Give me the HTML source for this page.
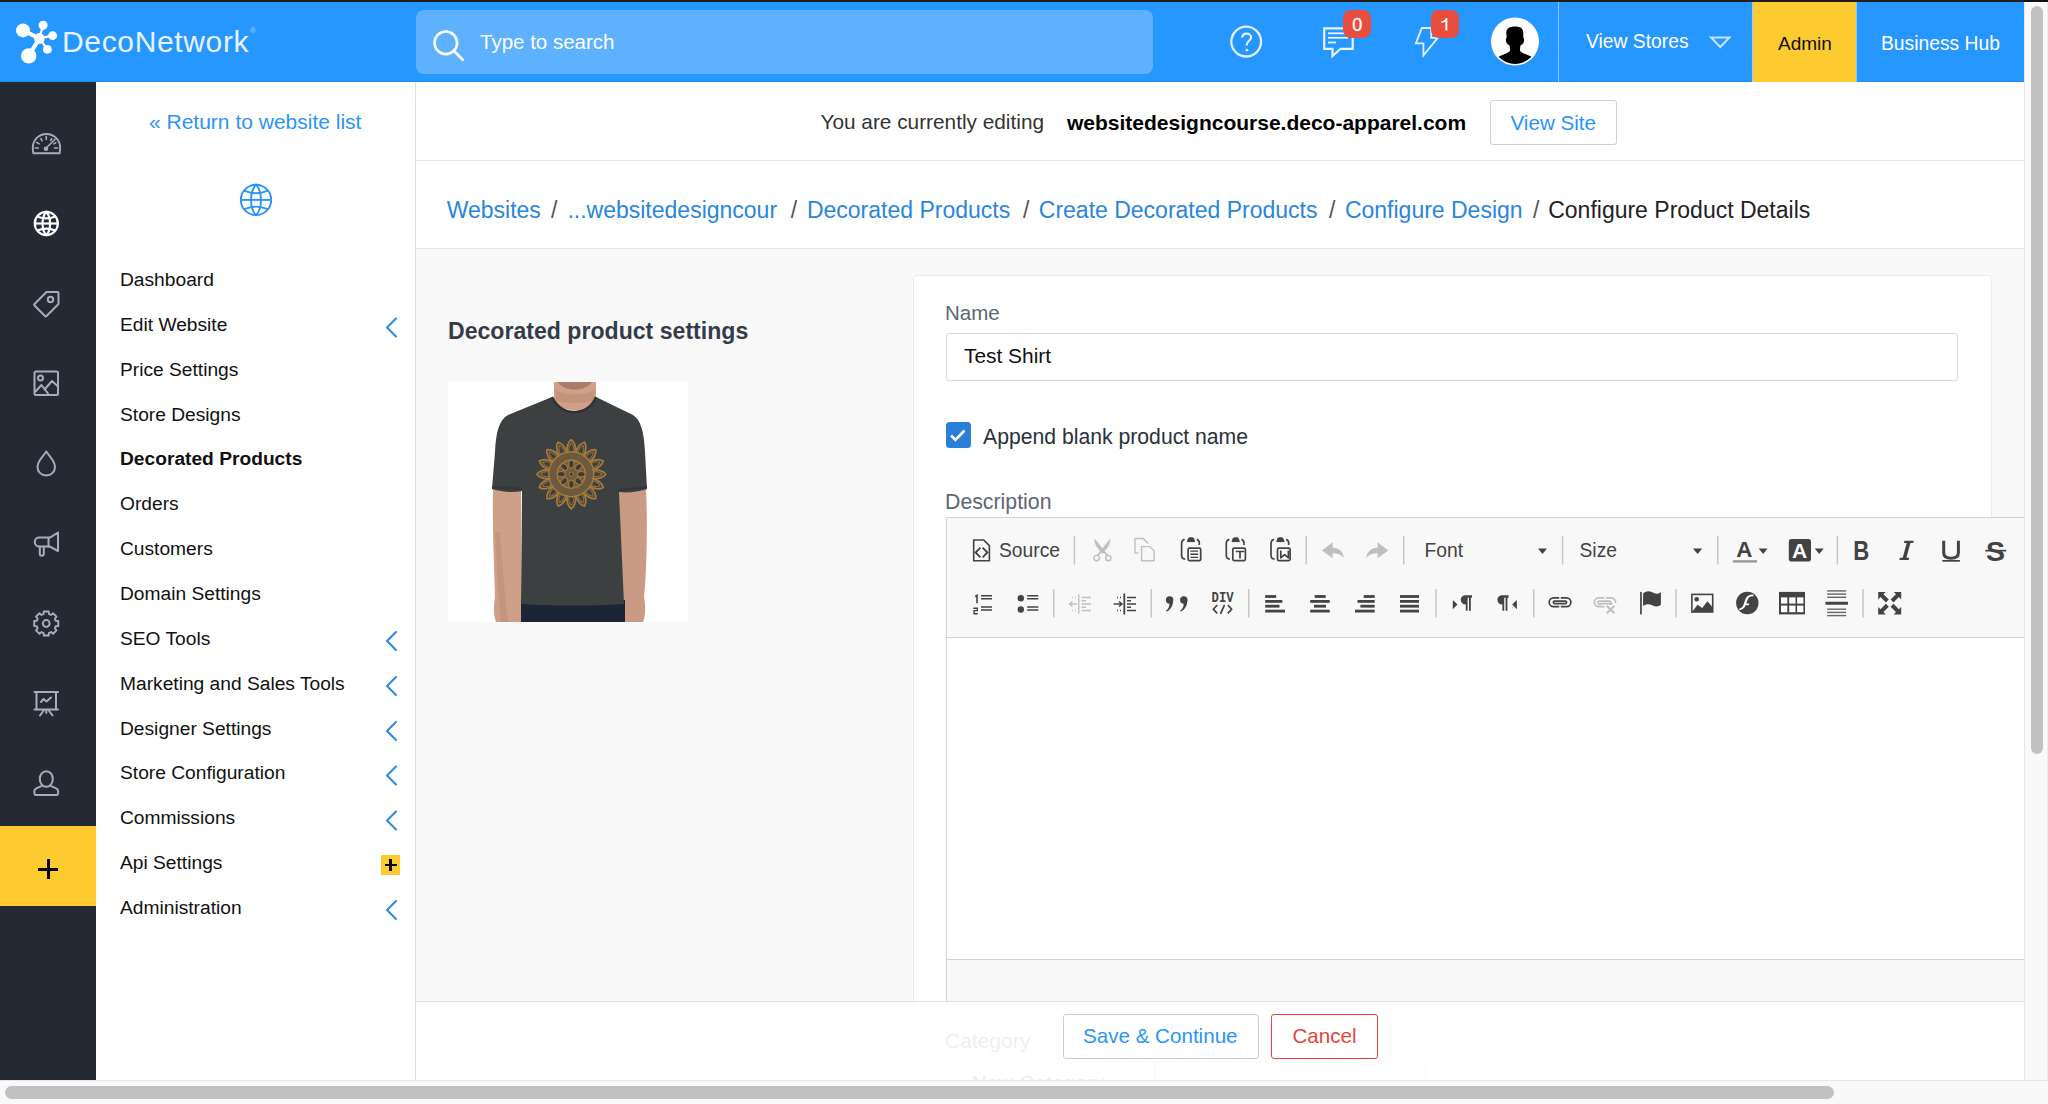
<!DOCTYPE html>
<html><head><meta charset="utf-8">
<style>
*{margin:0;padding:0;box-sizing:border-box}
html,body{width:2048px;height:1104px;overflow:hidden;background:#fff;font-family:"Liberation Sans",sans-serif}
.a{position:absolute}
.t{position:absolute;white-space:nowrap;line-height:1}
#topline{left:0;top:0;width:2048px;height:2px;background:linear-gradient(to right,#221d18 2024px,#121212 2024px)}
#hdr{left:0;top:2px;width:2024px;height:80px;background:#2697fe}
#hdrline{left:0;top:81px;width:2024px;height:1px;background:#1f8ff6}
#search{left:416px;top:10px;width:737px;height:64px;background:#5db1fd;border-radius:8px}
#side{left:0;top:82px;width:96px;height:998px;background:#232a34}
#nav{left:96px;top:82px;width:320px;height:998px;background:#fff;border-right:1px solid #dedede}
#main{left:416px;top:82px;width:1608px;height:998px;background:#f9f9f9;overflow:hidden}
#vscroll{left:2024px;top:2px;width:24px;height:1078px;background:#f9f9f9;border-left:1px solid #e6e6e6;border-right:1px solid #ececec;border-top:1px solid #fff}
#vthumb{left:2030.5px;top:6px;width:12.5px;height:747.5px;background:#c1c1c1;border-radius:7px}
#hscroll{left:0;top:1080px;width:2048px;height:24px;background:#f9f9f9;border-top:1px solid #e6e6e6}
#hthumb{left:5px;top:1086px;width:1829px;height:13px;background:#c1c1c1;border-radius:7px}
.nv{position:absolute;left:120px;font-size:19.2px;color:#111;white-space:nowrap;line-height:1}
.chev{position:absolute;left:385px;width:14px;height:20px}
</style></head><body>
<div class="a" id="topline"></div>
<div class="a" id="hdr"></div>
<div class="a" id="hdrline"></div>
<div class="a" id="search"></div>

<!-- logo -->
<svg class="a" style="left:10px;top:15px" width="60" height="55" viewBox="10 15 60 55">
 <g fill="#fff" stroke="#fff">
  <line x1="39.4" y1="38.4" x2="23" y2="30.4" stroke-width="4"/>
  <line x1="39.4" y1="38.4" x2="43.1" y2="25.2" stroke-width="2.2"/>
  <line x1="39.4" y1="38.4" x2="52.6" y2="35.7" stroke-width="2.2"/>
  <line x1="39.4" y1="38.4" x2="47.4" y2="49.4" stroke-width="2.2"/>
  <line x1="39.4" y1="38.4" x2="28.7" y2="55.9" stroke-width="4"/>
  <circle cx="39.4" cy="38.4" r="5.3" stroke="none"/>
  <circle cx="23" cy="30.4" r="7" stroke="none"/>
  <circle cx="43.1" cy="25.2" r="4.5" stroke="none"/>
  <circle cx="52.6" cy="35.7" r="4.4" stroke="none"/>
  <circle cx="47.4" cy="49.4" r="4.4" stroke="none"/>
  <circle cx="28.7" cy="55.9" r="7.7" stroke="none"/>
 </g>
</svg>
<div class="t" id="logotxt" style="left:62px;top:27px;font-size:30px;color:#f4f9ff;letter-spacing:0.65px;color:#e8f2ff">DecoNetwork</div>
<div class="t" style="left:250px;top:27px;font-size:8px;color:#9fd0ff">&reg;</div>
<!-- search -->
<svg class="a" style="left:428px;top:26px" width="42" height="40" viewBox="428 26 42 40">
 <circle cx="445.8" cy="42.8" r="11.3" fill="none" stroke="#fff" stroke-width="2.6"/>
 <line x1="454" y1="51" x2="463.5" y2="60.5" stroke="#fff" stroke-width="2.6"/>
</svg>
<div class="t" id="searchtxt" style="left:480px;top:32px;font-size:20.5px;color:#fff">Type to search</div>
<!-- help -->
<svg class="a" style="left:1226px;top:22px" width="40" height="40" viewBox="1226 22 40 40">
 <circle cx="1246.2" cy="41.6" r="14.9" fill="none" stroke="#e2f0ff" stroke-width="2.3"/>
 <path d="M1242.2 37.6 C1242.3 34.7 1244.2 33.6 1246.6 33.6 C1249.3 33.6 1251.1 35.3 1251.1 37.5 C1251.1 40.3 1247.3 41 1246.9 44 L1246.9 45.6" fill="none" stroke="#e2f0ff" stroke-width="2.1"/>
 <circle cx="1246.9" cy="50.2" r="1.4" fill="#e2f0ff"/>
</svg>
<!-- chat -->
<svg class="a" style="left:1318px;top:22px" width="40" height="40" viewBox="1318 22 40 40">
 <path d="M1324.2 28.4 H1352.7 V48.8 H1340.5 L1332.5 56 V48.8 H1324.2 Z" fill="none" stroke="#eaf4ff" stroke-width="2.2" stroke-linejoin="miter"/>
 <line x1="1328" y1="33.3" x2="1348" y2="33.3" stroke="#eaf4ff" stroke-width="1.8"/>
 <line x1="1328" y1="37.8" x2="1348" y2="37.8" stroke="#eaf4ff" stroke-width="1.8"/>
 <line x1="1328" y1="42.5" x2="1336" y2="42.5" stroke="#eaf4ff" stroke-width="1.8"/>
</svg>
<div class="a" style="left:1342.5px;top:9.5px;width:28.5px;height:28.5px;background:#e84e3e;border-radius:8px"></div>
<div class="t" style="left:1343px;top:16px;width:28.5px;text-align:center;font-size:18px;color:#fff;-webkit-text-stroke:0.3px #fff">0</div>
<!-- lightning -->
<svg class="a" style="left:1408px;top:22px" width="40" height="40" viewBox="1408 22 40 40">
 <path d="M1421.8 28 H1431.2 V37.8 H1437.8 L1423.4 55.4 V43.4 H1415.9 Z" fill="none" stroke="#e2f0ff" stroke-width="1.8" stroke-linejoin="miter"/>
</svg>
<div class="a" style="left:1430.5px;top:9.5px;width:28.5px;height:28.5px;background:#e84e3e;border-radius:8px"></div>
<svg class="a" style="left:1430px;top:9px" width="30" height="30" viewBox="1430 9 30 30"><path d="M1441.3 21.3 C1443.5 21 1445.3 19.8 1446 17.9 H1447.3 V30.4 H1445.4 V21.2 C1444.5 22.2 1443 22.8 1441.3 23 Z" fill="#fff"/></svg>
<!-- avatar -->
<svg class="a" style="left:1490px;top:17px" width="50" height="50" viewBox="1490 17 50 50">
 <defs><clipPath id="avc"><circle cx="1515" cy="41.5" r="22.4"/></clipPath></defs>
 <circle cx="1515" cy="41.5" r="24" fill="#fff"/>
 <g clip-path="url(#avc)" fill="#000">
  <path d="M1506.3 33 C1506.3 28.5 1509.5 26.5 1515 26.5 C1520.5 26.5 1523.3 28.5 1523.3 33 V37.5 C1524.3 38.2 1524.4 41.5 1523.4 43 C1522.6 44 1521.6 45 1520.4 45.5 L1519.9 50.5 C1520.9 52.3 1523.1 53.2 1527.1 54.8 C1529.6 55.8 1531.1 56.5 1532.1 57.5 L1534 70 H1496 L1497.9 57.5 C1498.9 56.5 1500.4 55.8 1502.9 54.8 C1506.9 53.2 1509.1 52.3 1510.1 50.5 L1509.6 45.5 C1508.4 45 1507.4 44 1506.6 43 C1505.6 41.5 1505.7 38.2 1506.7 37.5 Z"/>
 </g>
</svg>
<div class="a" style="left:1558px;top:2px;width:1px;height:80px;background:#86c4ff"></div>
<div class="t" id="viewstores" style="left:1586px;top:32px;font-size:19.3px;color:#fff">View Stores</div>
<svg class="a" style="left:1706px;top:32px" width="30" height="20" viewBox="1706 32 30 20">
 <path d="M1711 37.5 H1729.5 L1720.3 47 Z" fill="none" stroke="#c6e3ff" stroke-width="2"/>
</svg>
<div class="a" style="left:1752px;top:2px;width:104px;height:80px;background:#fdca2f"></div>
<div class="a" style="left:1856px;top:2px;width:1px;height:80px;background:#8cc6fb"></div><div class="a" style="left:1751.5px;top:2px;width:1px;height:80px;background:#9ccdf5"></div>
<div class="t" id="admin" style="left:1778px;top:33.5px;font-size:19px;color:#111">Admin</div>
<div class="t" id="bizhub" style="left:1881px;top:34px;font-size:19.3px;color:#fff">Business Hub</div>
<div class="a" id="side"></div>
<div class="a" id="nav"></div>

<!-- sidebar icons -->
<svg class="a" style="left:0;top:82px" width="96" height="998" viewBox="0 82 96 998">
 <g fill="none" stroke="#a8aeb9" stroke-width="2" stroke-linecap="round" stroke-linejoin="round">
  <!-- gauge -->
  <path d="M33.3 153.2 C32.8 151.5 32.8 149.5 32.8 147.6 A13.65 13.65 0 0 1 60.1 147.6 C60.1 149.5 60 151.5 59.6 153.2 Z" stroke-width="1.9"/>
  <line x1="35.2" y1="148" x2="38.2" y2="148" stroke-width="1.6"/><line x1="54.4" y1="148" x2="57.6" y2="148" stroke-width="1.6"/>
  <line x1="36.6" y1="142.4" x2="39" y2="143.8" stroke-width="1.6"/><line x1="40.9" y1="138.6" x2="42.1" y2="140.8" stroke-width="1.6"/><line x1="46.3" y1="136.6" x2="46.3" y2="139.4" stroke-width="1.6"/><line x1="51.7" y1="138.6" x2="50.6" y2="140.5" stroke-width="1.6"/><line x1="55.8" y1="142.7" x2="53.7" y2="143.9" stroke-width="1.6"/>
  <line x1="46" y1="148.2" x2="55" y2="139.2" stroke-width="1.6"/>
  <circle cx="46" cy="148.7" r="1.6" fill="#a8aeb9" stroke-width="1.4"/>
  <!-- tag -->
  <path d="M46.5 292 H57.5 C58 292 58.5 292.5 58.5 293 V304 L46.5 316 C46 316.5 45.5 316.5 45 316 L34.5 305.5 C34 305 34 304.5 34.5 304 Z"/>
  <circle cx="50.5" cy="299.5" r="2.7"/>
  <!-- image -->
  <rect x="34.5" y="371.5" width="23.5" height="23.5" rx="1.5"/>
  <circle cx="40.5" cy="378" r="2.5"/>
  <path d="M35.5 391.5 L41.5 385 L48 393.5 M44.5 389.5 L52 381 L57.5 386"/>
  <!-- drop -->
  <path d="M46.3 451.5 L52.5 460 C54.5 463 55 465 55 467 C55 472 51 475.5 46.3 475.5 C41.6 475.5 37.5 472 37.5 467 C37.5 465 38 463 40 460 Z"/>
  <!-- megaphone -->
  <path d="M58 532.5 V551 L50 546.6 H39.5 C36.8 546.6 34.8 544.6 34.8 542 C34.8 539.4 36.8 537.6 39.5 537.6 H50 Z"/>
  <line x1="48.5" y1="537.8" x2="48.5" y2="546.4"/>
  <path d="M39.8 546.8 V553.8 C39.8 555 40.6 555.8 41.8 555.8 C43 555.8 43.8 555 43.8 553.8 V546.8"/>
  <!-- gear -->
  <path d="M55.67 620.79 L58.30 621.06 L58.30 625.94 L55.67 626.21 A9.8 9.8 0 0 1 54.82 628.24 L56.50 630.30 L53.05 633.75 L50.99 632.07 A9.8 9.8 0 0 1 48.96 632.92 L48.69 635.55 L43.81 635.55 L43.54 632.92 A9.8 9.8 0 0 1 41.51 632.07 L39.45 633.75 L36.00 630.30 L37.68 628.24 A9.8 9.8 0 0 1 36.83 626.21 L34.20 625.94 L34.20 621.06 L36.83 620.79 A9.8 9.8 0 0 1 37.68 618.76 L36.00 616.70 L39.45 613.25 L41.51 614.93 A9.8 9.8 0 0 1 43.54 614.08 L43.81 611.45 L48.69 611.45 L48.96 614.08 A9.8 9.8 0 0 1 50.99 614.93 L53.05 613.25 L56.50 616.70 L54.82 618.76 A9.8 9.8 0 0 1 55.67 620.79 Z" stroke-width="1.9"/>
  <circle cx="46.25" cy="623.5" r="3.4"/>
  <!-- presentation -->
  <line x1="34.5" y1="692" x2="58" y2="692"/><line x1="34.5" y1="709.5" x2="58" y2="709.5"/>
  <path d="M36.5 692 V709.5 M56 692 V709.5"/>
  <path d="M41 702 L43.5 699 L46.5 701.5 L51 697.5"/>
  <path d="M40 715.5 L44 710 M52.5 715.5 L48.5 710 M46.3 710 V713"/>
  <!-- user -->
  <ellipse cx="46.3" cy="779" rx="6.5" ry="7.8"/>
  <path d="M41.5 786 C39 787.5 36 788 35 789.5 C34 790.5 34 794.5 35.5 795 H57 C58.5 794.5 58.5 790.5 57.5 789.5 C56.5 788 53.5 787.5 51 786"/>
 </g>
 <!-- globe active (white) -->
 <g fill="none" stroke="#fff" stroke-width="2.9" transform="translate(46.3,223.5) scale(0.76) translate(-256,-199.9)">
  <circle cx="256" cy="199.9" r="15.2"/>
  <path d="M256 184.7 C249.5 191.5 249.3 208.5 256 215.1 C262.7 208.5 262.5 191.5 256 184.7 Z"/>
  <line x1="240.8" y1="199.9" x2="271.2" y2="199.9"/>
  <path d="M244 190.6 C249 192.6 252.5 193.2 256 193.2 C259.5 193.2 263 192.6 268 190.6"/>
  <path d="M244 209.2 C249 207.2 252.5 206.6 256 206.6 C259.5 206.6 263 207.2 268 209.2"/>
 </g>
</svg>
<div class="a" style="left:0;top:825.5px;width:96px;height:80px;background:#fdca2f"></div>
<div class="a" style="left:38px;top:867.5px;width:20px;height:3px;background:#000"></div>
<div class="a" style="left:46.5px;top:859px;width:3px;height:20px;background:#000"></div>

<!-- nav panel -->
<div class="t" id="retlink" style="left:149px;top:111px;font-size:21px;color:#2b95f6">&laquo; Return to website list</div>
<svg class="a" style="left:236px;top:180px" width="40" height="40" viewBox="236 180 40 40">
 <g fill="none" stroke="#2b95f6" stroke-width="1.9">
  <circle cx="256" cy="199.9" r="15.2"/>
  <path d="M256 184.7 C249.5 191.5 249.3 208.5 256 215.1 C262.7 208.5 262.5 191.5 256 184.7 Z"/>
  <line x1="240.8" y1="199.9" x2="271.2" y2="199.9"/>
  <path d="M244 190.6 C249 192.6 252.5 193.2 256 193.2 C259.5 193.2 263 192.6 268 190.6"/>
  <path d="M244 209.2 C249 207.2 252.5 206.6 256 206.6 C259.5 206.6 263 207.2 268 209.2"/>
 </g>
</svg>
<div class="nv" style="top:269.5px">Dashboard</div>
<div class="nv" style="top:314.5px">Edit Website</div>
<div class="nv" style="top:359.5px">Price Settings</div>
<div class="nv" style="top:404.5px">Store Designs</div>
<div class="nv" style="top:448.5px;font-weight:bold">Decorated Products</div>
<div class="nv" style="top:493.5px">Orders</div>
<div class="nv" style="top:538.5px">Customers</div>
<div class="nv" style="top:583.5px">Domain Settings</div>
<div class="nv" style="top:628.5px">SEO Tools</div>
<div class="nv" style="top:673.5px">Marketing and Sales Tools</div>
<div class="nv" style="top:718.5px">Designer Settings</div>
<div class="nv" style="top:762.5px">Store Configuration</div>
<div class="nv" style="top:807.5px">Commissions</div>
<div class="nv" style="top:852.5px">Api Settings</div>
<div class="nv" style="top:897.5px">Administration</div>
<svg class="a" style="left:380px;top:300px" width="24" height="630" viewBox="380 300 24 630">
 <g fill="none" stroke="#2b8be2" stroke-width="2.1" stroke-linecap="round" stroke-linejoin="round">
  <path d="M396 318.5 L387 327.5 L396 336.5"/>
  <path d="M396 632 L387 641 L396 650"/>
  <path d="M396 677 L387 686 L396 695"/>
  <path d="M396 722 L387 731 L396 740"/>
  <path d="M396 766.5 L387 775.5 L396 784.5"/>
  <path d="M396 811.5 L387 820.5 L396 829.5"/>
  <path d="M396 901 L387 910 L396 919"/>
 </g>
</svg>
<div class="a" style="left:381px;top:854.5px;width:19px;height:20.5px;background:#fdca2f"></div>
<div class="a" style="left:384.5px;top:863.5px;width:12px;height:2.4px;background:#000"></div>
<div class="a" style="left:389.3px;top:858.6px;width:2.4px;height:12px;background:#000"></div>
<div class="a" id="main"></div>

<!-- main top bars -->
<div class="a" style="left:416px;top:82px;width:1608px;height:79px;background:#fff;border-bottom:1px solid #e4e4e4"></div>
<div class="a" style="left:416px;top:161px;width:1608px;height:88px;background:#fff;border-bottom:1px solid #e4e4e4"></div>
<div class="t" id="editing" style="left:820.5px;top:112.2px;font-size:20.8px;color:#333">You are currently editing</div>
<div class="t" id="domain" style="left:1067px;top:112.2px;font-size:21px;font-weight:bold;color:#000">websitedesigncourse.deco-apparel.com</div>
<div class="a" style="left:1490px;top:99.5px;width:127px;height:45.5px;border:1px solid #cfcfcf;border-radius:3px;background:#fff"></div>
<div class="t" id="viewsite" style="left:1510.5px;top:112.5px;font-size:20.6px;color:#2b95f6">View Site</div>
<div class="t bc" style="left:446.7px;top:199px;font-size:23px;color:#2a86dc">Websites</div>
<div class="t bc" style="left:551px;top:199px;font-size:23px;color:#555">/</div>
<div class="t bc" style="left:567.4px;top:199px;font-size:23px;color:#2a86dc">...websitedesigncour</div>
<div class="t bc" style="left:790.8px;top:199px;font-size:23px;color:#555">/</div>
<div class="t bc" style="left:806.9px;top:199px;font-size:23px;color:#2a86dc">Decorated Products</div>
<div class="t bc" style="left:1023px;top:199px;font-size:23px;color:#555">/</div>
<div class="t bc" style="left:1038.8px;top:199px;font-size:23px;color:#2a86dc">Create Decorated Products</div>
<div class="t bc" style="left:1329px;top:199px;font-size:23px;color:#555">/</div>
<div class="t bc" style="left:1344.9px;top:199px;font-size:23px;color:#2a86dc">Configure Design</div>
<div class="t bc" style="left:1533px;top:199px;font-size:23px;color:#555">/</div>
<div class="t bc" style="left:1548.2px;top:199px;font-size:23px;color:#222">Configure Product Details</div>

<!-- left column -->
<div class="t" id="dps" style="left:448px;top:319.7px;font-size:23.1px;font-weight:bold;color:#353c49">Decorated product settings</div>
<div class="a" id="prodimg" style="left:448px;top:382px;width:240px;height:240px;background:#fff;overflow:hidden"><svg width="240" height="240" viewBox="0 0 240 240">
 <rect width="240" height="240" fill="#fff"/>
 <path d="M45 104 C44 150 47 200 47 215 C45 225 46 235 48 240 H76 C77 232 76 224 73 214 L73 108 Z" fill="#cfa088"/>
 <path d="M198 104 C200 150 198 200 196 215 C198 225 197 235 195 240 H169 C168 232 169 224 172 214 L171 108 Z" fill="#c99a84"/>
 <path d="M47 150 C49 190 51 225 53 240 H60 C57 215 54 180 52 150 Z" fill="#b98a73" opacity="0.5"/>
 <path d="M106 0 H148 V22 C140 30 115 30 106 22 Z" fill="#cf9f86"/>
 <path d="M110 0 C113 5 120 7.5 127 7.5 C134 7.5 140 5 144 0 Z" fill="#9a7463" opacity="0.8"/>
 <path d="M108 8 C115 14 139 14 146 8 V18 C138 22 116 22 108 18 Z" fill="#b88a72" opacity="0.5"/>
 <rect x="73" y="218" width="104" height="22" fill="#1c2535"/>
 <path d="M104 15 C110 27 118 30 126 30 C134 30 143 27 148 15 L185 33 C193 38 196 50 197 70 L199 107 C190 110 180 111 171 110 L176 222 C150 224 100 224 73 222 L74 109 C65 111 54 110 44 107 L47 70 C48 50 51 38 60 33 Z" fill="#3d4041"/>
 <path d="M104 15 C110 27 118 30 126 30 C134 30 143 27 148 15" fill="none" stroke="#2f3233" stroke-width="2.5"/>
 <path d="M44 105 L74 107 M199 105 L171 108" stroke="#343738" stroke-width="2.5"/>
 <g fill="none" stroke="#a87b3b">
  <circle cx="123.3" cy="92.2" r="18.5" stroke-width="9" opacity="0.45"/><circle cx="123.3" cy="92.2" r="8" stroke-width="12" opacity="0.5"/>
  <path d="M119.1 71.1 Q118.2 61.6 123.3 57.7 Q128.4 61.6 127.5 71.1 M127.5 71.1 Q130.2 62.0 136.5 60.3 Q139.8 65.9 135.2 74.3 M135.2 74.3 Q141.3 66.9 147.7 67.8 Q148.6 74.2 141.2 80.3 M141.2 80.3 Q149.6 75.7 155.2 79.0 Q153.5 85.3 144.4 88.0 M144.4 88.0 Q153.9 87.1 157.8 92.2 Q153.9 97.3 144.4 96.4 M144.4 96.4 Q153.5 99.1 155.2 105.4 Q149.6 108.7 141.2 104.1 M141.2 104.1 Q148.6 110.2 147.7 116.6 Q141.3 117.5 135.2 110.1 M135.2 110.1 Q139.8 118.5 136.5 124.1 Q130.2 122.4 127.5 113.3 M127.5 113.3 Q128.4 122.8 123.3 126.7 Q118.2 122.8 119.1 113.3 M119.1 113.3 Q116.4 122.4 110.1 124.1 Q106.8 118.5 111.4 110.1 M111.4 110.1 Q105.3 117.5 98.9 116.6 Q98.0 110.2 105.4 104.1 M105.4 104.1 Q97.0 108.7 91.4 105.4 Q93.1 99.1 102.2 96.4 M102.2 96.4 Q92.7 97.3 88.8 92.2 Q92.7 87.1 102.2 88.0 M102.2 88.0 Q93.1 85.3 91.4 79.0 Q97.0 75.7 105.4 80.3 M105.4 80.3 Q98.0 74.2 98.9 67.8 Q105.3 66.9 111.4 74.3 M111.4 74.3 Q106.8 65.9 110.1 60.3 Q116.4 62.0 119.1 71.1 " stroke-width="1.7"/>
  <path d="M120.8 69.3 Q120.5 63.8 123.3 61.2 Q126.1 63.8 125.8 69.3 M129.8 70.1 Q131.6 64.9 135.2 63.6 Q136.7 67.1 134.3 72.0 M137.7 74.3 Q141.4 70.2 145.2 70.3 Q145.3 74.1 141.2 77.8 M143.5 81.2 Q148.4 78.8 151.9 80.3 Q150.6 83.9 145.4 85.7 M146.2 89.7 Q151.7 89.4 154.3 92.2 Q151.7 95.0 146.2 94.7 M145.4 98.7 Q150.6 100.5 151.9 104.1 Q148.4 105.6 143.5 103.2 M141.2 106.6 Q145.3 110.3 145.2 114.1 Q141.4 114.2 137.7 110.1 M134.3 112.4 Q136.7 117.3 135.2 120.8 Q131.6 119.5 129.8 114.3 M125.8 115.1 Q126.1 120.6 123.3 123.2 Q120.5 120.6 120.8 115.1 M116.8 114.3 Q115.0 119.5 111.4 120.8 Q109.9 117.3 112.3 112.4 M108.9 110.1 Q105.2 114.2 101.4 114.1 Q101.3 110.3 105.4 106.6 M103.1 103.2 Q98.2 105.6 94.7 104.1 Q96.0 100.5 101.2 98.7 M100.4 94.7 Q94.9 95.0 92.3 92.2 Q94.9 89.4 100.4 89.7 M101.2 85.7 Q96.0 83.9 94.7 80.3 Q98.2 78.8 103.1 81.2 M105.4 77.8 Q101.3 74.1 101.4 70.3 Q105.2 70.2 108.9 74.3 M112.3 72.0 Q109.9 67.1 111.4 63.6 Q115.0 64.9 116.8 70.1 " stroke-width="1.1" opacity="0.8"/>
  <circle cx="123.3" cy="92.2" r="22.5" stroke-width="1.4"/>
  <circle cx="123.3" cy="92.2" r="14" stroke-width="1.4"/>
  
 </g>
 <g fill="#3a3d3e" stroke="#a87b3b" stroke-width="1.1"><ellipse cx="123.3" cy="82.2" rx="2.7" ry="3.9" transform="rotate(0.0 123.3 82.2)"/><ellipse cx="130.4" cy="85.1" rx="2.7" ry="3.9" transform="rotate(45.0 130.4 85.1)"/><ellipse cx="133.3" cy="92.2" rx="2.7" ry="3.9" transform="rotate(90.0 133.3 92.2)"/><ellipse cx="130.4" cy="99.3" rx="2.7" ry="3.9" transform="rotate(135.0 130.4 99.3)"/><ellipse cx="123.3" cy="102.2" rx="2.7" ry="3.9" transform="rotate(180.0 123.3 102.2)"/><ellipse cx="116.2" cy="99.3" rx="2.7" ry="3.9" transform="rotate(225.0 116.2 99.3)"/><ellipse cx="113.3" cy="92.2" rx="2.7" ry="3.9" transform="rotate(270.0 113.3 92.2)"/><ellipse cx="116.2" cy="85.1" rx="2.7" ry="3.9" transform="rotate(315.0 116.2 85.1)"/></g>
 <circle cx="123.3" cy="92.2" r="2" fill="#3a3d3e" stroke="#a87b3b" stroke-width="1"/>
</svg></div>
<!-- card -->
<div class="a" style="left:912.5px;top:275px;width:1079px;height:900px;background:#fff;border:1px solid #ececec;border-radius:4px"></div>
<div class="t" id="lblname" style="left:945px;top:302.5px;font-size:20.5px;color:#5d6776">Name</div>
<div class="a" style="left:946px;top:333px;width:1012px;height:47.5px;border:1px solid #d9d9d9;border-radius:3px;background:#fff"></div>
<div class="t" id="testshirt" style="left:964px;top:346px;font-size:20.9px;color:#111">Test Shirt</div>
<div class="a" style="left:945.5px;top:422px;width:25.5px;height:26px;background:#2a80d9;border-radius:3.5px"></div>
<svg class="a" style="left:945px;top:422px" width="26" height="26" viewBox="945 422 26 26"><path d="M951 435.5 L955.5 440 L964.5 430.5" fill="none" stroke="#fff" stroke-width="2.6"/></svg>
<div class="t" id="append" style="left:983px;top:425.5px;font-size:21.2px;color:#2b313b">Append blank product name</div>
<div class="t" id="lbldesc" style="left:945px;top:491.7px;font-size:21.3px;color:#5d6776">Description</div>
<!-- editor -->
<div class="a" style="left:946px;top:517px;width:1100px;height:484px;border:1px solid #d1d1d1;border-bottom:none;background:#fff"></div>
<div class="a" style="left:947px;top:518px;width:1100px;height:119.5px;background:#f8f8f8;border-bottom:1px solid #d1d1d1"></div>
<div class="a" style="left:947px;top:959px;width:1100px;height:42px;background:#f8f8f8;border-top:1px solid #d1d1d1"></div>

<!-- editor toolbar -->
<svg class="a" style="left:947px;top:518px" width="1077" height="119" viewBox="947 518 1077 119">
 <defs>
  <g id="clip">
   <path d="M1184.6 539.4 C1182.8 540 1181.6 541.2 1181.6 543 V555.6 C1181.6 557.6 1182.9 559 1185.2 559.1" fill="none" stroke="#434343" stroke-width="1.7"/>
   <path d="M1196.8 539.4 C1198.5 540 1199.3 541.2 1199.3 543 V545" fill="none" stroke="#434343" stroke-width="1.7"/>
   <path d="M1187.3 541.6 L1188.4 538.6 C1188.6 538 1189 537.8 1189.6 537.8 H1192.4 C1193 537.8 1193.4 538 1193.6 538.6 L1194.7 541.6 Z" fill="#434343" stroke="#434343" stroke-width="1"/>
   <rect x="1188.1" y="548.2" width="12.6" height="12.4" rx="1.3" fill="none" stroke="#434343" stroke-width="1.7"/>
  </g>
 </defs>
 <!-- row1 -->
 <path d="M973.7 540 H983.7 L989.4 545.7 V560.8 H973.7 Z" fill="none" stroke="#434343" stroke-width="1.6"/>
 <path d="M980.4 547.6 L975.6 552.5 L980.4 557.4 M982.6 547.6 L987.4 552.5 L982.6 557.4" fill="none" stroke="#434343" stroke-width="1.8"/>
 <text x="999" y="556.8" font-family="Liberation Sans" font-size="19.3" fill="#434343">Source</text>
 <g fill="#c6c6c6">
  <rect x="1073.7" y="536" width="1.5" height="28.5"/>
  <rect x="1305.5" y="536" width="1.5" height="28.5"/>
  <rect x="1403" y="536" width="1.5" height="28.5"/>
  <rect x="1561.8" y="536" width="1.5" height="28.5"/>
  <rect x="1717" y="536" width="1.5" height="28.5"/>
  <rect x="1836.6" y="536" width="1.5" height="28.5"/>
 </g>
 <!-- scissors -->
 <g fill="#bfbfbf" stroke="#bfbfbf">
  <path d="M1095 539.4 C1094.5 543 1096.5 547 1101 551.5 L1103.5 553.2 L1104.5 551.5 Z" stroke-width="0.8"/>
  <path d="M1109.8 539.4 C1110.3 543 1108.3 547 1103.8 551.5 L1101.3 553.2 L1100.3 551.5 Z" stroke-width="0.8"/>
  <path d="M1102.4 550 L1097.3 555.6 M1102.4 550 L1107.6 555.6" stroke-width="1.8" fill="none"/>
  <circle cx="1096.6" cy="558.1" r="2.7" fill="none" stroke-width="1.4"/>
  <circle cx="1108.3" cy="558.1" r="2.7" fill="none" stroke-width="1.4"/>
 </g>
 <!-- copy -->
 <path d="M1138.6 552.9 H1135 V538.5 H1143.2 L1148 543.5" fill="none" stroke="#bfbfbf" stroke-width="1.4"/>
 <path d="M1141.6 546.6 H1149.9 L1154.1 551 V560.7 H1141.6 Z" fill="none" stroke="#bfbfbf" stroke-width="1.4"/>
 <!-- paste x3 -->
 <use href="#clip"/>
 <path d="M1190.4 551.1 H1198.1 M1190.4 554.3 H1198.1 M1190.4 557.4 H1198.1" stroke="#434343" stroke-width="1.4"/>
 <use href="#clip" transform="translate(44.7,0)"/>
 <path d="M1235.8 551.5 H1244.3 M1240 551.5 V558.5" stroke="#434343" stroke-width="1.7" fill="none"/>
 <use href="#clip" transform="translate(89.4,0)"/>
 <path d="M1280.8 550.5 V557.8 L1284.6 554.6 L1288.4 557.8 V550.5" stroke="#434343" stroke-width="1.7" fill="none" stroke-linejoin="round"/>
 <!-- undo redo -->
 <path d="M1321.9 550.5 L1332.6 542.3 V547.7 C1339.5 547.7 1343.4 552 1343.7 557.9 C1341 554.5 1337.5 553.3 1332.6 553.3 V558.3 Z" fill="#bfbfbf"/>
 <path d="M1388.3 550.5 L1377.6 542.3 V547.7 C1370.7 547.7 1366.8 552 1366.5 557.9 C1369.2 554.5 1372.7 553.3 1377.6 553.3 V558.3 Z" fill="#bfbfbf"/>
 <!-- font/size combos -->
 <text x="1424.5" y="556.7" font-family="Liberation Sans" font-size="19.3" fill="#434343">Font</text>
 <path d="M1538 548.5 H1547 L1542.5 554 Z" fill="#434343"/>
 <text x="1579.5" y="556.7" font-family="Liberation Sans" font-size="19.3" fill="#434343">Size</text>
 <path d="M1693 548.5 H1702.2 L1697.6 554 Z" fill="#434343"/>
 <!-- text color -->
 <text x="1736.2" y="557.1" font-family="Liberation Sans" font-weight="bold" font-size="22.3" fill="#434343">A</text>
 <rect x="1732.8" y="560.2" width="24.2" height="2.4" fill="#9a9a9a"/>
 <path d="M1758.7 548.5 H1767.6 L1763.15 554 Z" fill="#434343"/>
 <!-- bg color -->
 <rect x="1788.8" y="539.1" width="22.2" height="22.5" rx="2.8" fill="#434343"/>
 <text x="1792.1" y="557.9" font-family="Liberation Sans" font-weight="bold" font-size="21" fill="#fff">A</text>
 <path d="M1814.8 548.5 H1823.7 L1819.25 554 Z" fill="#434343"/>
 <!-- B I U S -->
 <text x="1853.3" y="560" font-family="Liberation Sans" font-weight="bold" font-size="27.5" fill="#434343" textLength="16" lengthAdjust="spacingAndGlyphs">B</text>
 <path d="M1904.5 540.8 H1913.8 L1913.2 543 H1910.4 L1906.4 557.8 H1909.2 L1908.6 560 H1899.3 L1899.9 557.8 H1902.7 L1906.7 543 H1903.9 Z" fill="#434343"/>
 <path d="M1943.7 540.8 V552.8 C1943.7 556.6 1946.3 558.3 1951 558.3 C1955.7 558.3 1958.4 556.6 1958.4 552.8 V540.8" fill="none" stroke="#434343" stroke-width="3"/>
 <rect x="1942.3" y="560" width="17.6" height="1.7" fill="#434343"/>
 <text x="1986" y="560.5" font-family="Liberation Sans" font-weight="bold" font-size="27.5" fill="#434343" textLength="19" lengthAdjust="spacingAndGlyphs">S</text>
 <rect x="1985.3" y="549.8" width="21" height="1.7" fill="#434343"/>
 <!-- row2 -->
 <g fill="#c6c6c6">
  <rect x="1053" y="589" width="1.5" height="28.5"/>
  <rect x="1150.5" y="589" width="1.5" height="28.5"/>
  <rect x="1248" y="589" width="1.5" height="28.5"/>
  <rect x="1435.2" y="589" width="1.5" height="28.5"/>
  <rect x="1533" y="589" width="1.5" height="28.5"/>
  <rect x="1675.3" y="589" width="1.5" height="28.5"/>
  <rect x="1862.3" y="589" width="1.5" height="28.5"/>
 </g>
 <!-- numbered -->
 <path d="M975.2 596.6 L977 595.3 V603.3" fill="none" stroke="#434343" stroke-width="1.6"/>
 <path d="M973.3 608.3 H977.3 V610.6 H974.1 V613.8 H977.8" fill="none" stroke="#434343" stroke-width="1.4"/>
 <path d="M981 595.8 H992 M981 598.8 H992 M981 607.1 H992 M981 610.1 H992" stroke="#434343" stroke-width="1.5"/>
 <!-- bullets -->
 <circle cx="1020.8" cy="598.3" r="3.2" fill="#434343"/><circle cx="1020.8" cy="609.5" r="3.2" fill="#434343"/>
 <path d="M1027.2 595.8 H1038.3 M1027.2 598.8 H1038.3 M1027.2 607.1 H1038.3 M1027.2 610.1 H1038.3" stroke="#434343" stroke-width="1.5"/>
 <!-- outdent -->
 <g stroke="#bfbfbf" stroke-width="1.4" fill="none">
  <path d="M1078.8 594 V614"/>
  <path d="M1081.6 597.5 H1091 M1081.6 600.7 H1086 M1081.6 604 H1091 M1081.6 607.2 H1086 M1081.6 610.5 H1091"/>
  <path d="M1072 597.5 H1073 M1075 597.5 H1076 M1072 610.5 H1073 M1075 610.5 H1076"/>
  <path d="M1077 604 H1070 M1072.5 601.5 L1069.5 604 L1072.5 606.5"/>
 </g>
 <!-- indent -->
 <g stroke="#434343" stroke-width="1.5" fill="none">
  <path d="M1124.3 593.5 V614.5" stroke-width="1.8"/>
  <path d="M1127 597.5 H1136 M1127 600.7 H1131 M1127 604 H1136 M1127 607.2 H1131 M1127 610.5 H1136"/>
  <path d="M1117 597.5 H1118 M1120 597.5 H1121 M1117 610.5 H1118 M1120 610.5 H1121"/>
  <path d="M1113.5 604 H1121.5 M1119 601.5 L1122 604 L1119 606.5"/>
 </g>
 <!-- blockquote -->
 <g fill="#434343">
  <circle cx="1169.6" cy="600" r="3.7"/>
  <path d="M1172.9 599.5 C1173.5 605 1171 609.5 1166.5 611.8 L1166 610.8 C1168.5 609 1169.6 606.5 1169.4 603.5 Z"/>
  <circle cx="1183.8" cy="600" r="3.7"/>
  <path d="M1187.1 599.5 C1187.7 605 1185.2 609.5 1180.7 611.8 L1180.2 610.8 C1182.7 609 1183.8 606.5 1183.6 603.5 Z"/>
 </g>
 <!-- DIV -->
 <text x="1211.6" y="602.2" font-family="Liberation Mono" font-weight="bold" font-size="14.6" fill="#434343" textLength="22" lengthAdjust="spacingAndGlyphs">DIV</text>
 <path d="M1217.2 605 L1213.4 609.2 L1217.2 613.4 M1227.8 605 L1231.6 609.2 L1227.8 613.4 M1224.5 604.8 L1220.5 613.8" fill="none" stroke="#434343" stroke-width="1.7"/>
 <!-- aligns -->
 <g fill="#434343">
  <rect x="1265.2" y="595.1" width="11" height="2.8"/><rect x="1265.2" y="600" width="17.2" height="2.8"/><rect x="1265.2" y="604.8" width="14.3" height="2.8"/><rect x="1265.2" y="609.7" width="19.8" height="2.8"/>
  <rect x="1314.7" y="595.1" width="11" height="2.8"/><rect x="1310.2" y="600" width="19.5" height="2.8"/><rect x="1314" y="604.8" width="12" height="2.8"/><rect x="1310.2" y="609.7" width="19.5" height="2.8"/>
  <rect x="1363.7" y="595.1" width="11" height="2.8"/><rect x="1357.5" y="600" width="17.2" height="2.8"/><rect x="1360.4" y="604.8" width="14.3" height="2.8"/><rect x="1355" y="609.7" width="19.7" height="2.8"/>
  <rect x="1400" y="595.1" width="19" height="2.8"/><rect x="1400" y="600" width="19" height="2.8"/><rect x="1400" y="604.8" width="19" height="2.8"/><rect x="1400" y="609.7" width="19" height="2.8"/>
 </g>
 <!-- ltr rtl -->
 <g fill="#434343">
  <path d="M1452.8 600.1 L1457.5 604.6 L1452.8 609.2 Z"/>
  <path d="M1466 595.2 H1472 V597.8 H1470.8 V610.8 H1469 V597.8 H1467.6 V610.8 H1465.8 V604.6 C1462.8 604.4 1460.8 602.5 1460.8 599.9 C1460.8 597.2 1462.8 595.2 1466 595.2 Z"/>
  <path d="M1516.9 600.1 L1512.2 604.6 L1516.9 609.2 Z"/>
  <path d="M1502.6 595.2 H1508.6 V597.8 H1507.4 V610.8 H1505.6 V597.8 H1504.2 V610.8 H1502.4 V604.6 C1499.4 604.4 1497.4 602.5 1497.4 599.9 C1497.4 597.2 1499.4 595.2 1502.6 595.2 Z"/>
 </g>
 <!-- link -->
 <g fill="none" stroke="#434343" stroke-width="1.7">
  <path d="M1559.2 597.9 H1553.6 A4.4 4.4 0 0 0 1553.6 606.7 H1559.2"/>
  <path d="M1560.8 597.9 H1566.5 A4.4 4.4 0 0 1 1566.5 606.7 H1560.8"/>
  <rect x="1553.3" y="601.1" width="13.3" height="2.5" rx="1.25"/>
 </g>
 <g fill="none" stroke="#bfbfbf" stroke-width="1.7">
  <path d="M1604.4 597.9 H1598.8 A4.4 4.4 0 0 0 1598.8 606.7 H1604.4"/>
  <path d="M1606 597.9 H1611.7 A4.4 4.4 0 0 1 1615.5 603 M1609.5 604.5 C1611 604.5 1611.8 604 1612 603"/>
  <path d="M1598.5 601.1 H1609.5 A1.25 1.25 0 0 1 1609.5 603.6 H1601 A1.25 1.25 0 0 1 1598.5 601.1"/>
  <path d="M1606.7 605.8 L1614.5 613.3 M1614.5 605.8 L1606.7 613.3" stroke-width="1.9"/>
 </g>
 <!-- flag -->
 <rect x="1640.1" y="591.9" width="1.7" height="22.5" fill="#434343"/>
 <path d="M1643.1 593.5 C1646 590.8 1649.2 590.8 1652.2 592.3 C1655.2 593.8 1658.2 594.5 1660.9 591.9 V604.6 C1658.2 607.3 1655.2 606.8 1652.2 605.3 C1649.2 603.8 1646 603.6 1643.1 606 Z" fill="#434343"/>
 <!-- image -->
 <rect x="1691.9" y="594.4" width="20.8" height="17.6" fill="none" stroke="#434343" stroke-width="1.6"/>
 <circle cx="1696.7" cy="599.3" r="2.3" fill="#434343"/>
 <path d="M1692.5 611.5 L1697.5 604.8 L1702.2 608 L1707.5 601.3 L1712.3 607 V612 H1692.5 Z" fill="#434343"/>
 <!-- flash -->
 <circle cx="1747.3" cy="603" r="11.2" fill="#434343"/>
 <path d="M1753.5 596.3 C1750 596 1748.3 597.5 1747.3 600.5 L1746.2 603.5 H1749.3 L1748.8 605.3 H1745.6 C1744.5 608.5 1742.5 610 1739.2 610.2 L1739.3 608.5 C1741.6 608.3 1742.7 607 1743.5 604.8 L1745.3 599.5 C1746.5 596 1749.3 594.5 1753.5 594.6 Z" fill="#fff"/>
 <!-- table -->
 <rect x="1779" y="591.9" width="26" height="22.5" fill="#434343"/>
 <g fill="#fff">
  <rect x="1781" y="597.4" width="6.3" height="6.2"/><rect x="1789.2" y="597.4" width="6.3" height="6.2"/><rect x="1797.1" y="597.4" width="6.3" height="6.2"/>
  <rect x="1781" y="605.6" width="6.3" height="6.6"/><rect x="1789.2" y="605.6" width="6.3" height="6.6"/><rect x="1797.1" y="605.6" width="6.3" height="6.6"/>
 </g>
 <!-- hr -->
 <g fill="#666">
  <rect x="1827.2" y="590.2" width="19" height="1.4"/><rect x="1827.2" y="593.4" width="19" height="1.4"/><rect x="1827.2" y="596.6" width="19" height="1.4"/>
  <rect x="1827.2" y="608.5" width="19" height="1.4"/><rect x="1827.2" y="611.7" width="19" height="1.4"/><rect x="1827.2" y="614.9" width="19" height="1.4"/>
 </g>
 <rect x="1825.5" y="601.8" width="22.5" height="3" rx="0.5" fill="#434343"/>
 <!-- maximize -->
 <g fill="#434343">
  <path d="M1878.2 591.9 H1885.7 L1883.4 594.2 L1888.8 599.6 L1885.9 602.5 L1880.5 597.1 L1878.2 599.4 Z"/>
  <path d="M1901.2 591.9 H1893.7 L1896 594.2 L1890.6 599.6 L1893.5 602.5 L1898.9 597.1 L1901.2 599.4 Z"/>
  <path d="M1878.2 614.4 H1885.7 L1883.4 612.1 L1888.8 606.7 L1885.9 603.8 L1880.5 609.2 L1878.2 606.9 Z"/>
  <path d="M1901.2 614.4 H1893.7 L1896 612.1 L1890.6 606.7 L1893.5 603.8 L1898.9 609.2 L1901.2 606.9 Z"/>
 </g>
</svg>

<!-- faded content under footer -->
<div class="t" style="left:945px;top:1030px;font-size:21px;color:#5d6776">Category</div>
<div class="a" style="left:945.5px;top:1060.5px;width:209px;height:48px;border:1px solid #d9d9d9;border-radius:3px 0 0 3px;background:#fff"></div>
<div class="a" style="left:1155px;top:1060.5px;width:270px;height:48px;border:1px solid #d9d9d9;border-radius:0 3px 3px 0;background:#fff"></div>
<div class="t" style="left:971.5px;top:1072px;font-size:21px;color:#555">New Category</div>
<!-- footer -->
<div class="a" style="left:416px;top:1000.5px;width:1608px;height:80px;background:rgba(255,255,255,0.89);border-top:1px solid #e2e2e2"></div>
<div class="a" style="left:1063px;top:1013.5px;width:196px;height:45.5px;border:1px solid #cdcdcd;border-radius:3px;background:#fff"></div>
<div class="t" id="savebtn" style="left:1083px;top:1026.2px;font-size:20.6px;color:#2b95f6">Save &amp; Continue</div>
<div class="a" style="left:1270.5px;top:1013.5px;width:107px;height:45.5px;border:1.5px solid #e5463a;border-radius:3px;background:#fff"></div>
<div class="t" id="cancelbtn" style="left:1292.5px;top:1026.2px;font-size:20.6px;color:#e5463a">Cancel</div>
<div class="a" id="vscroll"></div>
<div class="a" id="vthumb"></div>
<div class="a" id="hscroll"></div>
<div class="a" id="hthumb"></div>
</body></html>
